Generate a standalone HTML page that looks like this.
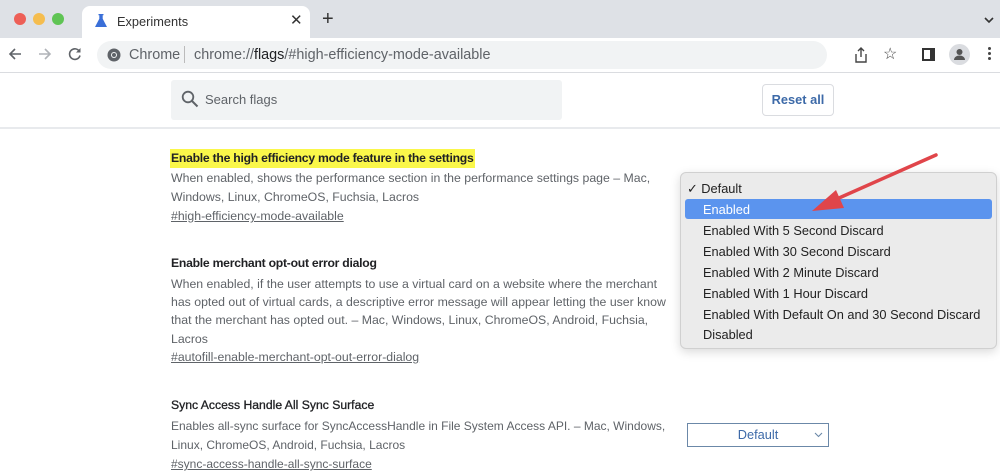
<!DOCTYPE html>
<html><head><meta charset="utf-8"><style>
*{margin:0;padding:0;box-sizing:border-box}
body{width:1000px;height:476px;overflow:hidden;background:#fff;font-family:"Liberation Sans",Arial,sans-serif;position:relative;color:#202124}
.abs{position:absolute}
.t{font-size:12.3px;line-height:19.5px;color:#5f6368;white-space:nowrap}
.h{font-size:12.2px;font-weight:bold;color:#202124;white-space:nowrap;letter-spacing:-0.25px}
.l{text-decoration:underline;color:#5f6368}
.mi{position:absolute;left:22px;font-size:12.8px;color:#222;white-space:nowrap}
</style></head><body>
<div class="abs" style="left:0;top:0;width:1000px;height:38px;background:#dee1e6"></div>
<div class="abs" style="left:14px;top:13px;width:12px;height:12px;border-radius:50%;background:#ed5f57"></div>
<div class="abs" style="left:33px;top:13px;width:12px;height:12px;border-radius:50%;background:#f5bd4f"></div>
<div class="abs" style="left:52px;top:13px;width:12px;height:12px;border-radius:50%;background:#5fc454"></div>
<div class="abs" style="left:82px;top:6px;width:228px;height:34px;background:#fff;border-radius:8px 8px 0 0"></div>
<svg class="abs" style="left:95px;top:14px" width="12" height="13" viewBox="0 0 12 13"><path d="M3.5 0h5v1.2h-0.8v3.5L12 13H0l4.3-8.3V1.2h-0.8z" fill="#3a6fd8"/></svg>
<div class="abs" style="left:117px;top:14px;font-size:12.8px;color:#333">Experiments</div>
<div class="abs" style="left:290px;top:11px;font-size:15px;color:#333">✕</div>
<div class="abs" style="left:322px;top:8px;font-size:20px;color:#333">+</div>
<svg class="abs" style="left:984px;top:17px" width="10" height="7"><path d="M1 1l4 4 4-4" stroke="#333" stroke-width="1.6" fill="none"/></svg>
<svg class="abs" style="left:8px;top:47px" width="14" height="14"><path d="M13 7H2M7 2L2 7l5 5" stroke="#5f6368" stroke-width="1.6" fill="none"/></svg>
<svg class="abs" style="left:38px;top:47px" width="14" height="14"><path d="M1 7h11M7 2l5 5-5 5" stroke="#b0b3b8" stroke-width="1.6" fill="none"/></svg>
<svg class="abs" style="left:68px;top:47px" width="14" height="14"><path d="M11.5 4.5A5.3 5.3 0 1 0 12 8.5" stroke="#5f6368" stroke-width="1.6" fill="none"/><path d="M12.5 1v4.5H8z" fill="#5f6368"/></svg>
<div class="abs" style="left:97px;top:41px;width:730px;height:28px;border-radius:14px;background:#f1f3f4"></div>
<svg class="abs" style="left:107px;top:48px" width="14" height="14"><circle cx="7" cy="7" r="6.5" fill="#5f6368"/><circle cx="7" cy="7" r="3" fill="#f1f3f4"/><circle cx="7" cy="7" r="2" fill="#5f6368"/></svg>
<div class="abs" style="left:129px;top:47px;font-size:14.4px;color:#5f6368">Chrome</div>
<div class="abs" style="left:184px;top:46px;width:1px;height:17px;background:#bbb"></div>
<div class="abs" style="left:194px;top:47px;font-size:14.4px;color:#5f6368;white-space:nowrap">chrome://<span style="color:#202124">flags</span>/#high-efficiency-mode-available</div>
<svg class="abs" style="left:855px;top:47px" width="12" height="16"><path d="M6 10V1M3 4l3-3 3 3M1 7v8h10V7" stroke="#444" stroke-width="1.4" fill="none"/></svg>
<div class="abs" style="left:883px;top:44px;font-size:16px;color:#444">☆</div>
<div class="abs" style="left:922px;top:48px;width:13px;height:13px;border:2px solid #333;border-right-width:5px"></div>
<div class="abs" style="left:949px;top:44px;width:21px;height:21px;border-radius:50%;background:#dadce0"></div>
<svg class="abs" style="left:952px;top:47px" width="15" height="15"><circle cx="7.5" cy="5" r="3" fill="#555"/><path d="M2 13c0-3 3-4.5 5.5-4.5S13 10 13 13z" fill="#555"/></svg>
<div class="abs" style="left:988px;top:47px;width:3px;height:3px;border-radius:50%;background:#444;box-shadow:0 5px 0 #444,0 10px 0 #444"></div>
<div class="abs" style="left:0;top:72px;width:1000px;height:1px;background:#dadce0"></div>
<div class="abs" style="left:171px;top:80px;width:391px;height:40px;background:#f1f3f4;border-radius:3px"></div>
<svg class="abs" style="left:181px;top:90px" width="18" height="18"><circle cx="7" cy="7" r="5.3" stroke="#5f6368" stroke-width="1.8" fill="none"/><path d="M11 11l5.5 5.5" stroke="#5f6368" stroke-width="2"/></svg>
<div class="abs" style="left:205px;top:92px;font-size:13px;color:#5f6368">Search flags</div>
<div class="abs" style="left:762px;top:84px;width:72px;height:32px;border:1px solid #dadce0;border-radius:4px;font-size:12.8px;font-weight:bold;color:#3d6aa8;text-align:center;line-height:30px">Reset all</div>
<div class="abs" style="left:0;top:127px;width:1000px;height:2px;background:#e8eaed"></div>
<div class="abs h" style="left:170px;top:149px;background:#faf74a;padding:1px 1px;line-height:17px">Enable the high efficiency mode feature in the settings</div>
<div class="abs t" style="left:171px;top:169px;line-height:19px">When enabled, shows the performance section in the performance settings page – Mac,<br>Windows, Linux, ChromeOS, Fuchsia, Lacros<br><span class="l">#high-efficiency-mode-available</span></div>
<div class="abs h" style="left:171px;top:256px">Enable merchant opt-out error dialog</div>
<div class="abs t" style="left:171px;top:275px;line-height:18.2px">When enabled, if the user attempts to use a virtual card on a website where the merchant<br>has opted out of virtual cards, a descriptive error message will appear letting the user know<br>that the merchant has opted out. – Mac, Windows, Linux, ChromeOS, Android, Fuchsia,<br>Lacros<br><span class="l">#autofill-enable-merchant-opt-out-error-dialog</span></div>
<div class="abs h" style="left:171px;top:398px;font-weight:normal;letter-spacing:0;color:#202124;-webkit-text-stroke:0.3px #202124">Sync Access Handle All Sync Surface</div>
<div class="abs t" style="left:171px;top:417px;font-size:12px;line-height:19px">Enables all-sync surface for SyncAccessHandle in File System Access API. – Mac, Windows,<br>Linux, ChromeOS, Android, Fuchsia, Lacros<br><span class="l">#sync-access-handle-all-sync-surface</span></div>
<div class="abs" style="left:687px;top:423px;width:142px;height:24px;border:1px solid #6b88a8;font-size:12.8px;color:#3d6aa8;text-align:center;line-height:22px">Default</div>
<svg class="abs" style="left:814px;top:432px" width="9" height="6"><path d="M1 1l3.5 3.5L8 1" stroke="#6b88a8" stroke-width="1.1" fill="none"/></svg>
<div class="abs" style="left:680px;top:172px;width:317px;height:177px;background:#ebebeb;border:1px solid #d0d0d0;border-radius:6px;box-shadow:0 3px 10px rgba(0,0,0,.15)">
<div class="mi" style="left:6px;top:8px">✓ Default</div>
<div style="position:absolute;left:4px;top:26px;width:307px;height:20px;background:#5b94ee;border-radius:3px"></div>
<div class="mi" style="top:29px;color:#fff">Enabled</div>
<div class="mi" style="top:50px">Enabled With 5 Second Discard</div>
<div class="mi" style="top:71px">Enabled With 30 Second Discard</div>
<div class="mi" style="top:92px">Enabled With 2 Minute Discard</div>
<div class="mi" style="top:113px">Enabled With 1 Hour Discard</div>
<div class="mi" style="top:134px">Enabled With Default On and 30 Second Discard</div>
<div class="mi" style="top:154px">Disabled</div>
</div>
<svg class="abs" style="left:800px;top:150px" width="145" height="70"><path d="M136 5L30 52" stroke="#e0454a" stroke-width="3.5" stroke-linecap="round"/><path d="M12 61L36 40L44 58z" fill="#e0454a"/></svg>
</body></html>
